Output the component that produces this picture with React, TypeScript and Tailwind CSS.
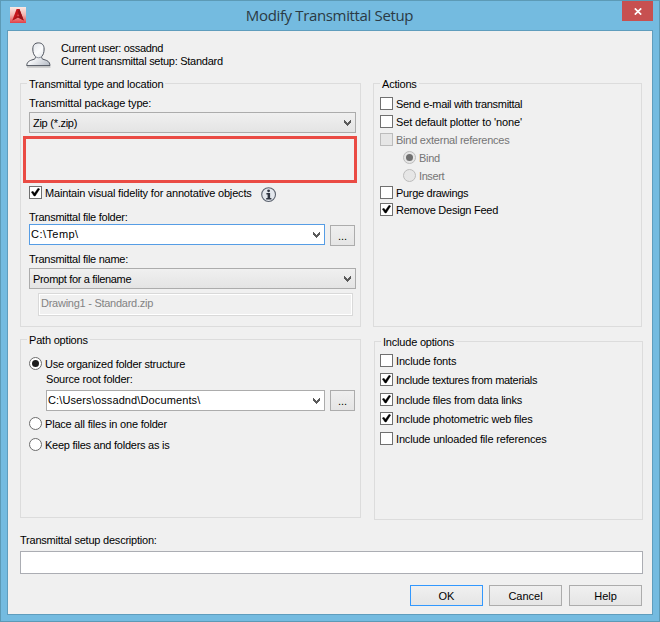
import React, { useState } from 'react';
import clsx from 'clsx';

const Chevron: React.FC = () => (
  <svg width="7" height="6" viewBox="0 0 7 6" shapeRendering="crispEdges" className="shrink-0">
    <path fill="#5a5a5a" d="M0 0h1v1h1v1h1v1h1v-1h1v-1h1v-1h1v3h-1v1h-1v1h-1v1h-1v-1h-1v-1h-1v-1h-1z" />
  </svg>
);

interface ComboProps {
  value: string;
  editable?: boolean;
  focused?: boolean;
  className?: string;
  textClass?: string;
}

const Combo: React.FC<ComboProps> = ({ value, editable, focused, className, textClass }) => (
  <div
    className={clsx(
      'flex h-[21px] items-start justify-between border pr-[4px]',
      editable ? 'bg-white pl-px pt-[3px]' : 'bg-linear-to-b from-[#f0f0f0] to-[#e4e4e4] pl-[3px] pt-[4px]',
      focused ? 'border-[#569de5]' : 'border-[#acacac]',
      className
    )}
  >
    <span className={textClass}>{value}</span>
    <span className={editable ? 'pt-[4px]' : 'pt-[3px]'}>
      <Chevron />
    </span>
  </div>
);

interface OptionProps {
  label: string;
  checked?: boolean;
  disabled?: boolean;
  className?: string;
  textClass?: string;
  onClick?: () => void;
}

const Check: React.FC<OptionProps> = ({ label, checked, disabled, className, textClass, onClick }) => (
  <div className={clsx('flex h-[13px] items-start gap-[3px]', className)} onClick={onClick}>
    <span
      className={clsx(
        'flex size-[13px] shrink-0 items-center justify-center border',
        disabled ? 'border-[#bcbcbc] bg-[#e6e6e6]' : 'border-[#707070] bg-white'
      )}
    >
      {checked && (
        <svg width="11" height="11" viewBox="0 0 11 11">
          <path d="M1.3 5 L3 4.3 L4.5 6.2 L8 1.3 L9.7 2 L5.2 9 L4 9 Z" fill="#000" stroke="#000" strokeWidth="0.4" />
        </svg>
      )}
    </span>
    <span className={clsx('pt-px', disabled && 'text-[#757575]', textClass)}>{label}</span>
  </div>
);

const Radio: React.FC<OptionProps> = ({ label, checked, disabled, className, textClass, onClick }) => (
  <div className={clsx('flex h-[13px] items-start gap-[3px]', className)} onClick={onClick}>
    <span
      className={clsx(
        'flex size-[13px] shrink-0 items-center justify-center rounded-full border',
        disabled ? 'border-[#bcbcbc] bg-[#e6e6e6]' : 'border-[#6c6c6c] bg-white'
      )}
    >
      {checked && <span className={clsx('size-[7px] rounded-full', disabled ? 'bg-[#707070]' : 'bg-[#1d1d1d]')} />}
    </span>
    <span className={clsx('pt-px', disabled && 'text-[#757575]', textClass)}>{label}</span>
  </div>
);

interface GroupProps {
  title: string;
  className?: string;
  titleClass?: string;
  children: React.ReactNode;
}

const Group: React.FC<GroupProps> = ({ title, className, titleClass, children }) => (
  <fieldset className={clsx('border border-[#dcdcdc]', className)}>
    <legend className={clsx('ml-[6px] h-[13px] px-[2px] pt-px', titleClass)}>{title}</legend>
    {children}
  </fieldset>
);

const BrowseButton: React.FC<{ className?: string }> = ({ className }) => (
  <button
    className={clsx(
      'h-[21px] w-[25px] shrink-0 border border-[#acacac] bg-linear-to-b from-[#efefef] to-[#e5e5e5] pt-[2px] leading-[13px]',
      className
    )}
  >
    ...
  </button>
);

const PushButton: React.FC<{ label: string; className: string }> = ({ label, className }) => (
  <button
    className={clsx(
      'flex h-[21px] w-[73px] justify-center border bg-linear-to-b from-[#f0f0f0] to-[#e5e5e5] pt-[4px]',
      className
    )}
  >
    {label}
  </button>
);

const AppIcon: React.FC = () => (
  <svg width="16" height="16" viewBox="0 0 16 16">
    <defs>
      <linearGradient id="tile" x1="0" y1="0" x2="0" y2="1">
        <stop offset="0" stopColor="#fbe9e4" />
        <stop offset="0.5" stopColor="#f3b5b0" />
        <stop offset="1" stopColor="#e23e45" />
      </linearGradient>
    </defs>
    <rect width="16" height="16" fill="url(#tile)" />
    <path d="M2.3 13.4 L6.6 2 H9.4 L13.8 13.4 L8 10.4 Z" fill="#c4161c" />
    <path d="M9.4 2 L13.8 13.4 L8 10.4 L9.6 9 L7.8 4.6 Z" fill="#96141a" />
    <path d="M7.3 8.8 L8 7.2 L8.8 8.8 Z" fill="#e58480" />
    <path d="M2.3 13.4 L6.4 9.2 L8 10.4 Z" fill="#a81519" />
  </svg>
);

const UserIcon: React.FC = () => (
  <svg width="26" height="27" viewBox="0 0 26 27">
    <defs>
      <linearGradient id="skin" x1="0" y1="0" x2="1" y2="1">
        <stop offset="0" stopColor="#d4d8df" />
        <stop offset="0.45" stopColor="#fbfcfd" />
        <stop offset="1" stopColor="#b4bac4" />
      </linearGradient>
    </defs>
    <path d="M1 25 H24.5" stroke="#c9c9c9" strokeWidth="1.6" />
    <path
      d="M9.4 14.4 C9.7 16.6 9 17 7 17.6 C3.6 18.6 1 19.6 0.7 23.6 H24 C23.7 19.6 21.5 18.6 18.1 17.6 C16.2 17 15.4 16.6 15.7 14.4 C17.4 12.8 18.1 10.4 18.1 7 C18.1 3 16 0.9 12.4 0.9 C8.8 0.9 6.8 3 6.8 7 C6.8 10.4 7.7 12.8 9.4 14.4 Z"
      fill="url(#skin)"
      stroke="#4d525c"
      strokeWidth="1"
    />
    <path d="M9.5 14.6 C11.2 16.2 13.9 16.2 15.6 14.6" fill="none" stroke="#8d929b" strokeWidth="1" />
  </svg>
);

const InfoIcon: React.FC = () => (
  <svg width="16" height="16" viewBox="0 0 16 16">
    <circle cx="7.6" cy="7.6" r="6.9" fill="#e3e7ed" stroke="#5b626e" strokeWidth="1.1" />
    <circle cx="7.6" cy="3.8" r="1.4" fill="#2f3541" />
    <path d="M5.4 6 H9.1 V11 H10.4 V12.5 H5.2 V11 H6.6 V7.4 H5.4 Z" fill="#2f3541" />
  </svg>
);

const App: React.FC = () => {
  const [pathMode, setPathMode] = useState<string>('organized');
  const [visualFidelity, setVisualFidelity] = useState<boolean>(true);

  return (
    <div className="flex h-[622px] w-[660px] flex-col border border-[#5c9ab6] bg-[#74bbe0] font-['Liberation_Sans',Arial,sans-serif] text-[11px] leading-[13px] whitespace-nowrap text-black">
      {/* Title bar */}
      <header className="flex h-[29px] items-start justify-between pr-[6px] pl-[9px]">
        <span className="w-[27px] pt-[6px]">
          <AppIcon />
        </span>
        <h1 className="pt-[4px] font-['Open_Sans',sans-serif] text-[15px] leading-[20px] tracking-[-0.35px] text-[#2b3a44]">
          Modify Transmittal Setup
        </h1>
        <button className="flex h-[20px] w-[31px] items-center justify-center bg-[#c75050]">
          <svg width="8" height="7" viewBox="0 0 8 7">
            <path d="M0.8 0.4 L7.2 6.6 M7.2 0.4 L0.8 6.6" stroke="#fff" strokeWidth="1.7" />
          </svg>
        </button>
      </header>

      <main className="ml-[6px] h-[585px] w-[646px] border border-[#5f9dbd] bg-[#f0f0f0] pt-[11px] pl-[12px]">
        {/* Current user */}
        <div className="flex h-[26px] gap-[9px] pl-[6px]">
          <span className="w-[26px]">
            <UserIcon />
          </span>
          <div>
            <div className="tracking-[-0.32px]">Current user: ossadnd</div>
            <div className="tracking-[-0.27px]">Current transmittal setup: Standard</div>
          </div>
        </div>

        <div className="mt-[9px] flex gap-[12px]">
          <div className="flex w-[341px] flex-col gap-[6px]">
            <Group title="Transmittal type and location" className="h-[250px]" titleClass="tracking-[-0.2px]">
              <div className="pt-[7px] pl-[8px]">
                <div className="tracking-[-0.13px]">Transmittal package type:</div>
                <Combo value="Zip (*.zip)" className="mt-[2px] w-[327px]" textClass="tracking-[-0.27px]" />
                <div className="mt-[3px] -ml-[6px] h-[47px] w-[334px] border-[3px] border-[#ea4b44]" />
                <div className="mt-[3px] flex h-[16px] gap-[9px]">
                  <Check
                    label="Maintain visual fidelity for annotative objects"
                    checked={visualFidelity}
                    textClass="tracking-[-0.17px]"
                    onClick={() => setVisualFidelity(!visualFidelity)}
                  />
                  <span className="pt-px">
                    <InfoIcon />
                  </span>
                </div>
                <div className="mt-[9px] tracking-[-0.26px]">Transmittal file folder:</div>
                <div className="flex gap-[5px]">
                  <Combo value="C:\Temp\" editable focused className="w-[296px]" textClass="tracking-[0.45px]" />
                  <BrowseButton className="mt-px" />
                </div>
                <div className="mt-[7px] tracking-[-0.26px]">Transmittal file name:</div>
                <Combo value="Prompt for a filename" className="mt-[2px] w-[327px]" textClass="tracking-[-0.33px]" />
                <div className="mt-[4px] ml-[9px] h-[23px] w-[315px] border border-[#d9d9d9]">
                  <div className="h-full border border-white pt-[2px] pl-px">
                    <div className="tracking-[-0.26px] text-[#838383]">Drawing1 - Standard.zip</div>
                  </div>
                </div>
              </div>
            </Group>

            <Group title="Path options" className="h-[185px]" titleClass="tracking-[-0.2px]">
              <div className="pt-[11px] pl-[8px]">
                <Radio
                  label="Use organized folder structure"
                  checked={pathMode === 'organized'}
                  textClass="tracking-[-0.24px]"
                  onClick={() => setPathMode('organized')}
                />
                <div className="mt-[3px] ml-[17px] tracking-[-0.2px]">Source root folder:</div>
                <div className="mt-[4px] ml-[17px] flex gap-[5px]">
                  <Combo
                    value="C:\Users\ossadnd\Documents\"
                    editable
                    className="w-[279px]"
                    textClass="tracking-[0.12px]"
                  />
                  <BrowseButton />
                </div>
                <Radio
                  label="Place all files in one folder"
                  checked={pathMode === 'single'}
                  className="mt-[6px]"
                  textClass="tracking-[-0.2px]"
                  onClick={() => setPathMode('single')}
                />
                <Radio
                  label="Keep files and folders as is"
                  checked={pathMode === 'keep'}
                  className="mt-[8px]"
                  textClass="tracking-[-0.25px]"
                  onClick={() => setPathMode('keep')}
                />
              </div>
            </Group>
          </div>

          <div className="flex w-[270px] flex-col gap-[8px]">
            <Group title="Actions" className="h-[250px] w-[269px]" titleClass="tracking-[-0.2px]">
              <div className="pt-[7px] pl-[6px]">
                <Check label="Send e-mail with transmittal" textClass="tracking-[-0.32px]" />
                <Check label="Set default plotter to 'none'" className="mt-[5px]" textClass="tracking-[-0.15px]" />
                <Check label="Bind external references" disabled className="mt-[5px]" textClass="tracking-[-0.24px]" />
                <Radio label="Bind" checked disabled className="mt-[5px] ml-[23px]" textClass="tracking-[-0.3px]" />
                <Radio label="Insert" disabled className="mt-[5px] ml-[23px]" textClass="tracking-[-0.4px]" />
                <Check label="Purge drawings" className="mt-[4px]" textClass="tracking-[-0.3px]" />
                <Check label="Remove Design Feed" checked className="mt-[4px]" textClass="tracking-[-0.24px]" />
              </div>
            </Group>

            <Group title="Include options" className="ml-px h-[185px] w-[269px]" titleClass="tracking-[-0.2px]">
              <div className="pt-[6px] pl-[5px]">
                <Check label="Include fonts" textClass="tracking-[-0.16px]" />
                <Check
                  label="Include textures from materials"
                  checked
                  className="mt-[6px]"
                  textClass="tracking-[-0.3px]"
                />
                <Check label="Include files from data links" checked className="mt-[7px]" textClass="tracking-[-0.23px]" />
                <Check label="Include photometric web files" checked className="mt-[6px]" textClass="tracking-[-0.18px]" />
                <Check label="Include unloaded file references" className="mt-[7px]" textClass="tracking-[-0.17px]" />
              </div>
            </Group>
          </div>
        </div>

        {/* Description */}
        <div className="mt-[14px] tracking-[-0.22px]">Transmittal setup description:</div>
        <div className="mt-[4px] h-[23px] w-[623px] border border-[#abadb3] bg-white" />

        {/* Dialog buttons */}
        <div className="mt-[11px] flex w-[622px] justify-end">
          <PushButton label="OK" className="mr-[6px] border-[#3298fe]" />
          <PushButton label="Cancel" className="mr-[7px] border-[#acacac]" />
          <PushButton label="Help" className="border-[#acacac]" />
        </div>
      </main>
    </div>
  );
};

export default App;
